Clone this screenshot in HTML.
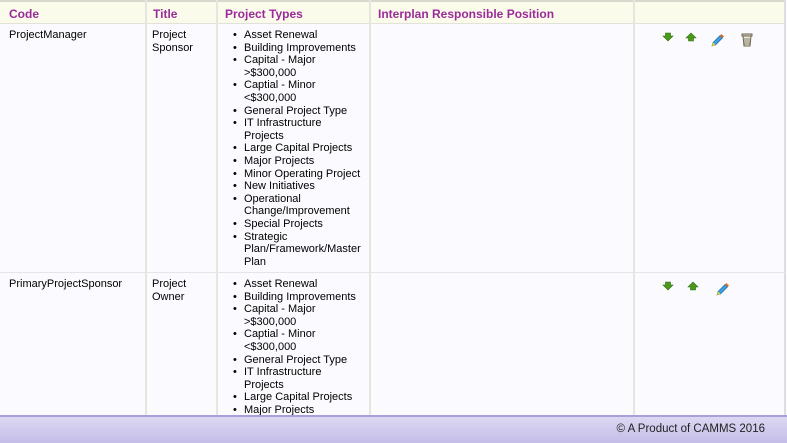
<!DOCTYPE html><html><head><style>
*{margin:0;padding:0;box-sizing:border-box}
body{width:787px;height:443px;overflow:hidden;background:#fbfbff;font-family:"Liberation Sans",sans-serif;font-size:11px;color:#000;position:relative}
.hd{position:absolute;top:0;left:0;width:786px;height:24px;background:#fafbeb;border-top:2px solid #d8d8cc;border-bottom:1px solid #e2e2da}
.hd div{position:absolute;top:5px;color:#9b2b9b;font-weight:bold;font-family:"Liberation Sans",sans-serif;font-size:12px}
.v{position:absolute;top:0;width:2px;background:#e6e6e0;height:415px}
.h{position:absolute;left:0;width:786px;height:1px;background:#e6e6e6}
.c{position:absolute;line-height:12.6px;font-family:"Liberation Sans",sans-serif;font-size:11px}
ul{list-style:none}
li{position:relative;padding-left:11px}
li:before{content:"•";position:absolute;left:0}
.ft{position:absolute;left:0;top:415px;width:787px;height:28px;background:linear-gradient(#dcd8f2,#c4bde8);border-top:2px solid #a9a0d8;text-align:right;padding-right:22px;line-height:24px;color:#222;font-family:"Liberation Sans",sans-serif;font-size:11.5px}
</style></head><body>
<div class="hd"><div style="left:9px">Code</div><div style="left:153px">Title</div><div style="left:225px">Project Types</div><div style="left:378px">Interplan Responsible Position</div></div>
<div class="v" style="left:145px"></div><div class="v" style="left:216px"></div><div class="v" style="left:369px"></div><div class="v" style="left:633px"></div><div class="v" style="left:784px;background:#ddd"></div>
<div class="h" style="top:272px"></div>
<div class="c" style="left:9px;top:29px">ProjectManager</div>
<div class="c" style="left:152px;top:29px">Project<br>Sponsor</div>
<ul class="c" style="left:233px;top:29px;width:128px">
<li>Asset Renewal</li><li>Building Improvements</li><li>Capital - Major &gt;$300,000</li><li>Captial - Minor &lt;$300,000</li><li>General Project Type</li><li>IT Infrastructure Projects</li><li>Large Capital Projects</li><li>Major Projects</li><li>Minor Operating Project</li><li>New Initiatives</li><li>Operational Change/Improvement</li><li>Special Projects</li><li>Strategic Plan/Framework/Master Plan</li></ul>
<div class="c" style="left:9px;top:278px">PrimaryProjectSponsor</div>
<div class="c" style="left:152px;top:278px">Project<br>Owner</div>
<ul class="c" style="left:233px;top:278px;width:128px">
<li>Asset Renewal</li><li>Building Improvements</li><li>Capital - Major &gt;$300,000</li><li>Captial - Minor &lt;$300,000</li><li>General Project Type</li><li>IT Infrastructure Projects</li><li>Large Capital Projects</li><li>Major Projects</li></ul>
<svg style="position:absolute;left:0;top:0" width="787" height="415">
<defs>
<g id="dn"><path d="M-2.5,-4h5v3h2.5l-5,5l-5,-5h2.5z" fill="#4a9a1a" stroke="#2f6a10" stroke-width=".6"/></g>
<g id="up"><path d="M-2.5,4h5v-3h2.5l-5,-5l-5,5h2.5z" fill="#4a9a1a" stroke="#2f6a10" stroke-width=".6"/></g>
<g id="pen"><path d="M-6,6l1,-3.5l7,-7l2.5,2.5l-7,7z" fill="#3aa0e0" stroke="#1a5a90" stroke-width=".6"/><path d="M-6,6l1,-3.5l2.5,2.5z" fill="#e8e020"/><path d="M2,-4.5l1.5,-1.5l2.5,2.5l-1.5,1.5z" fill="#e07020"/></g>
</defs>
<use href="#dn" x="668" y="37"/><use href="#up" x="691" y="37"/><use href="#pen" x="718" y="40"/>
<use href="#dn" x="668" y="286"/><use href="#up" x="693" y="286"/><use href="#pen" x="723" y="289"/>
<g transform="translate(747,40)" stroke="#6a6250" stroke-width="1"><rect x="-5" y="-6" width="10" height="2" fill="#d8d0b8"/><path d="M-4,-4h8l-1,10h-6z" fill="#efe9d8"/><path d="M-2,-2v7M0,-2v7M2,-2v7" fill="none" stroke-width=".8"/></g>
</svg>
<div class="ft">© A Product of CAMMS 2016</div>
</body></html>
